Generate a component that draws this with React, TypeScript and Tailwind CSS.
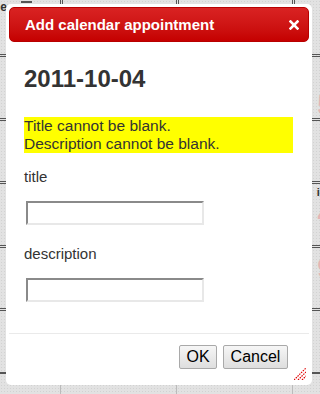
import React from "react";

const font = { fontFamily: '"Liberation Sans", Arial, sans-serif' };

function CalendarBackdrop() {
  return (
    <div className="absolute inset-0 flex flex-col bg-[#e2e2e2] bg-[radial-gradient(#d2d2d2_1px,transparent_1px)] bg-[length:3px_3px]">
      <div className="flex h-[6px] shrink-0">
        <div className="w-[60px] relative">
          <div className="absolute left-[21px] top-[1px] w-[11px] h-[2px] bg-[#555]" />
        </div>
        <div className="w-[116px] border-l-[3px] border-double border-[#555]" />
        <div className="w-[116px] border-l-[3px] border-double border-[#555]" />
        <div className="flex-1 border-l-[3px] border-double border-[#555]" />
      </div>
      <div className="h-[51px] shrink-0 border-b-[3px] border-double border-[#555]" />
      <div className="h-[64px] shrink-0 border-b-[3px] border-double border-[#555] flex justify-end">
        <span className="text-[30px] leading-[30px] font-bold text-[#e6b5b5] mt-[33px] mr-[-14px]">5</span>
      </div>
      <div className="h-[63px] shrink-0 border-b-[3px] border-double border-[#555]" />
      <div className="h-[64px] shrink-0 border-b-[3px] border-double border-[#555] flex flex-col items-end">
        <span className="text-[11px] leading-[11px] font-bold text-[#333] mt-[3px] mr-[-6px]">ic</span>
        <span className="text-[28px] leading-[28px] font-bold text-[#e6b5b5] mt-[2px] mr-[-13px]">4</span>
      </div>
      <div className="h-[63px] shrink-0 border-b-[3px] border-double border-[#555] flex justify-end">
        <span className="text-[30px] leading-[30px] font-bold text-[#e6b5b5] mt-[5px] mr-[-14px]">9</span>
      </div>
      <div className="h-[63px] shrink-0 border-b-[2px] border-[#555]" />
      <div className="flex flex-1">
        <div className="w-[60px]" />
        <div className="w-[116px] border-l border-[#bbb]" />
        <div className="w-[116px] border-l border-[#bbb]" />
        <div className="flex-1 border-l border-[#bbb]" />
      </div>
      <span className="absolute left-[-3px] top-[1px] text-[12px] leading-[12px] font-bold text-[#333]">le</span>
    </div>
  );
}

function ResizeHandle() {
  return (
    <svg width="12" height="12" viewBox="0 0 12 12" className="absolute right-[3px] bottom-[2px]">
      <g stroke="#e00000" strokeWidth="1.2" strokeDasharray="1.5 1" fill="none">
        <line x1="0" y1="12" x2="12" y2="0" />
        <line x1="4" y1="12" x2="12" y2="4" />
        <line x1="8" y1="12" x2="12" y2="8" />
      </g>
    </svg>
  );
}

export default function App() {
  return (
    <div className="relative w-[320px] h-[394px] overflow-hidden" style={font}>
      <CalendarBackdrop />
      <div className="absolute left-[6px] top-[4px] w-[306px] h-[381px] bg-white rounded-[5px] p-[3px] flex flex-col">
        <div className="h-[35px] shrink-0 rounded-[5px] bg-gradient-to-b from-[#d92222] to-[#c50000] border border-[#b80000] flex items-center justify-between pl-[15px] pr-[9px]">
          <span className="text-white font-bold text-[15px] leading-[18px]">Add calendar appointment</span>
          <svg width="10" height="10" viewBox="0 0 10 10">
            <g stroke="white" strokeWidth="2.6" strokeLinecap="square">
              <line x1="1.5" y1="1.5" x2="8.5" y2="8.5" />
              <line x1="8.5" y1="1.5" x2="1.5" y2="8.5" />
            </g>
          </svg>
        </div>
        <div className="flex-1 flex flex-col items-start pl-[15px] text-[#333]">
          <div className="mt-[23px] text-[24px] leading-[28px] font-bold">2011-10-04</div>
          <div className="mt-[24px] w-[269px] bg-[#ffff00] text-[15.5px] leading-[18px]">
            <div>Title cannot be blank.</div>
            <div>Description cannot be blank.</div>
          </div>
          <div className="mt-[15px] text-[15px] leading-[18px]">title</div>
          <input className="mt-[15px] ml-[2px] w-[178px] h-[24px] bg-white border-2 border-t-[#8a8a8a] border-l-[#8a8a8a] border-b-[#e8e8e8] border-r-[#e8e8e8] outline-none" />
          <div className="mt-[20px] text-[15px] leading-[18px]">description</div>
          <input className="mt-[15px] ml-[2px] w-[178px] h-[24px] bg-white border-2 border-t-[#8a8a8a] border-l-[#8a8a8a] border-b-[#e8e8e8] border-r-[#e8e8e8] outline-none" />
        </div>
        <div className="relative shrink-0 border-t border-[#eaeaea] pt-[11px] pb-[13px] pr-[21px] flex justify-end gap-[6px]">
          <button className="h-[24px] w-[38px] rounded-[2px] border border-[#a9a9a9] bg-gradient-to-b from-[#f6f6f6] to-[#dedede] text-[16px] leading-[20px] text-black">OK</button>
          <button className="h-[24px] w-[65px] rounded-[2px] border border-[#a9a9a9] bg-gradient-to-b from-[#f6f6f6] to-[#dedede] text-[16px] leading-[20px] text-black">Cancel</button>
          <ResizeHandle />
        </div>
      </div>
    </div>
  );
}
